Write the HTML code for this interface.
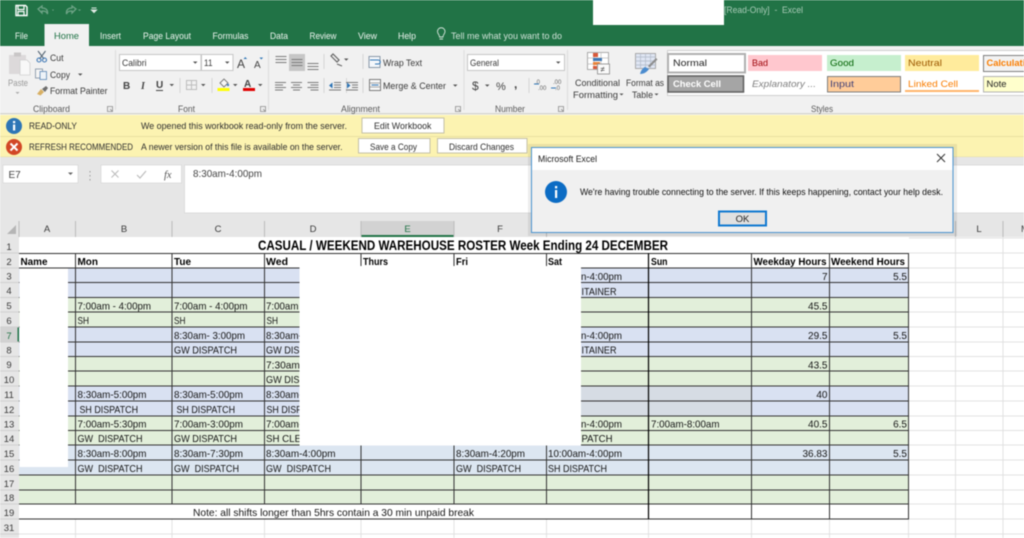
<!DOCTYPE html>
<html lang="en">
<head>
<meta charset="utf-8">
<title>Excel</title>
<style>
html,body{margin:0;padding:0;background:#fff;width:1024px;height:538px;overflow:hidden}
svg{display:block;filter:blur(.4px)}
text{font-family:"Liberation Sans",sans-serif;font-size:10px;fill:#444;white-space:pre}
.t{fill:#eef5f0;font-size:9.5px}
.r{fill:#3a3a3a;font-size:9.5px}
.g{fill:#5a5a5a;font-size:9px}
.y{fill:#2e2e2e;font-size:9.5px}
.c{fill:#161616;font-size:10.2px}
.b{fill:#000;font-size:10.2px;font-weight:bold}
.n{fill:#161616;font-size:10px;text-anchor:end}
.h{fill:#3a3a3a;font-size:9.5px;text-anchor:middle}
.rn{fill:#3a3a3a;font-size:9.5px;text-anchor:middle}
</style>
</head>
<body>
<svg width="1024" height="538" viewBox="0 0 1024 538" xmlns="http://www.w3.org/2000/svg">
<rect width="1024" height="538" fill="#fff"/>

<!-- title bar -->
<rect width="1024" height="46" fill="#217346"/>
<rect x="593" width="131" height="25" fill="#fff"/>
<text x="724" y="13" textLength="79" lengthAdjust="spacingAndGlyphs" style="fill:#a9cbb7;font-size:9.5px">[Read-Only]  -  Excel</text>
<!-- QAT -->
<path d="M16 5.5h9.5l1.5 1.5v8.500h-11z" fill="none" stroke="#fff" stroke-width="1.400"/>
<path d="M18 6v3.500h6V6M18 15v-3.500h6V15" fill="none" stroke="#fff" stroke-width="1.200"/>
<path d="M38 9l4-3v2c4 0 6 2 5.500 6-1-2.500-2.500-3-5.500-3v2z" fill="none" stroke="#6fa487" stroke-width="1.300"/>
<path d="M52 9.500l2 0-1 1.500z" fill="#6fa487"/>
<path d="M76 9l-4-3v2c-4 0-6 2-5.500 6 1-2.500 2.500-3 5.500-3v2z" fill="none" stroke="#6fa487" stroke-width="1.300"/>
<path d="M78 9.500l3 0-1.500 1.500z" fill="#6fa487"/>
<path d="M91.500 8h5M91.500 10l2.500 2.500 2.500-2.500z" stroke="#dfe9e3" fill="#dfe9e3"/>
<!-- tabs -->
<rect x="44.500" y="24" width="44.500" height="23" fill="#f1f1f1"/>
<text class="t" x="15" y="39" textLength="13" lengthAdjust="spacingAndGlyphs">File</text>
<text x="54" y="39" textLength="25" lengthAdjust="spacingAndGlyphs" style="fill:#217346;font-size:9.5px">Home</text>
<text class="t" x="100" y="39" textLength="21" lengthAdjust="spacingAndGlyphs">Insert</text>
<text class="t" x="143" y="39" textLength="48" lengthAdjust="spacingAndGlyphs">Page Layout</text>
<text class="t" x="212.500" y="39" textLength="36" lengthAdjust="spacingAndGlyphs">Formulas</text>
<text class="t" x="270" y="39" textLength="18" lengthAdjust="spacingAndGlyphs">Data</text>
<text class="t" x="309.500" y="39" textLength="27" lengthAdjust="spacingAndGlyphs">Review</text>
<text class="t" x="358" y="39" textLength="19" lengthAdjust="spacingAndGlyphs">View</text>
<text class="t" x="398" y="39" textLength="18" lengthAdjust="spacingAndGlyphs">Help</text>
<path d="M439.500 39h3.500M439.500 37h3.500c0-2.500 2-3 2-5.500a3.700 3.700 0 0 0-7.500 0c0 2.500 2 3 2 5.500z" fill="none" stroke="#d5e5db" stroke-width=".9"/>
<text class="t" x="451" y="39" textLength="111" lengthAdjust="spacingAndGlyphs" style="fill:#cfe2d7">Tell me what you want to do</text>

<!-- ribbon -->
<rect y="46" width="1024" height="68" fill="#f1f1f1"/>
<rect y="113" width="1024" height="1.500" fill="#d8d8d0"/>
<path d="M115.500 50v60M268.500 50v60M464 50v60M567.500 50v60" stroke="#dcdcdc"/>
<text class="g" x="33" y="112" textLength="37" lengthAdjust="spacingAndGlyphs">Clipboard</text>
<text class="g" x="178" y="112" textLength="17" lengthAdjust="spacingAndGlyphs">Font</text>
<text class="g" x="341" y="112" textLength="39" lengthAdjust="spacingAndGlyphs">Alignment</text>
<text class="g" x="495" y="112" textLength="30" lengthAdjust="spacingAndGlyphs">Number</text>
<text class="g" x="811" y="112" textLength="22" lengthAdjust="spacingAndGlyphs">Styles</text>
<g fill="none" stroke="#8a8a8a" stroke-width=".8">
<path d="M107.500 106.500h5v5h-5zM110 109l2.500 2.500"/>
<path d="M260.500 106.500h5v5h-5zM263 109l2.500 2.500"/>
<path d="M455.500 106.500h5v5h-5zM458 109l2.500 2.500"/>
<path d="M558.500 106.500h5v5h-5zM561 109l2.500 2.500"/>
</g>
<!-- clipboard -->
<rect x="9" y="55" width="17" height="19" fill="#dcd9da"/>
<rect x="14" y="52.500" width="7" height="4" fill="#c9c6c7"/>
<path d="M20 60h7l3 3v12H20z" fill="#f8f8f8" stroke="#cfcfcf" stroke-width=".8"/>
<text x="8" y="86" textLength="20" lengthAdjust="spacingAndGlyphs" style="fill:#9a9a9a;font-size:9.500px">Paste</text>
<path d="M15.500 92h4l-2 2z" fill="#a8a8a8"/>
<path d="M38 51l6 8M45.500 51l-6 8" stroke="#5a6a78" stroke-width="1.100"/>
<circle cx="39" cy="60" r="2" fill="none" stroke="#3f78b5" stroke-width="1.100"/>
<circle cx="44.500" cy="60" r="2" fill="none" stroke="#3f78b5" stroke-width="1.100"/>
<text class="r" x="50" y="61" textLength="13.500" lengthAdjust="spacingAndGlyphs">Cut</text>
<rect x="35.500" y="69" width="7" height="9" fill="#f5f5f5" stroke="#7d8ea0" stroke-width=".8"/>
<rect x="40" y="71.500" width="6.500" height="8" fill="#eef3f8" stroke="#5b86b5" stroke-width=".8"/>
<text class="r" x="50" y="78" textLength="20" lengthAdjust="spacingAndGlyphs">Copy</text>
<path d="M78 73.500h4.500l-2.250 2.200z" fill="#555"/>
<path d="M37 94l4-5 3 3-3.500 3.500z" fill="#d8b064"/>
<path d="M42 89l4-3 2 2-3 4z" fill="#6e6e6e"/>
<text class="r" x="50" y="94" textLength="57.500" lengthAdjust="spacingAndGlyphs">Format Painter</text>
<!-- font -->
<rect x="119.500" y="54.500" width="81.500" height="16" fill="#fff" stroke="#c6c6c6"/>
<rect x="201.500" y="54.500" width="31.500" height="16" fill="#fff" stroke="#c6c6c6"/>
<text class="r" x="122" y="66" textLength="24.500" lengthAdjust="spacingAndGlyphs">Calibri</text>
<text class="r" x="204" y="66" textLength="8.500" lengthAdjust="spacingAndGlyphs">11</text>
<path d="M193 61.500h4.500l-2.250 2.200zM225 61.500h4.500l-2.250 2.200z" fill="#555"/>
<text x="237" y="68" style="fill:#444;font-size:12px">A</text>
<path d="M243.500 59l1.800-2 1.800 2z" fill="#2f75b5"/>
<text x="254" y="68" style="fill:#444;font-size:10px">A</text>
<path d="M259.500 57.500l1.800 2 1.800-2z" fill="#2f75b5"/>
<text x="123" y="89" style="fill:#444;font-size:10px;font-weight:bold">B</text>
<text x="141" y="89" style="fill:#444;font-size:10px;font-style:italic;font-family:'Liberation Serif',serif;font-weight:bold">I</text>
<text x="156" y="88" style="fill:#444;font-size:10px;font-weight:bold">U</text>
<path d="M156 90.500h7" stroke="#444"/>
<path d="M169.500 84h4.500l-2.250 2.200zM201 84h4.500l-2.250 2.200zM233 84h4.500l-2.250 2.200zM258 84h4.500l-2.250 2.200z" fill="#555"/>
<path d="M180 78v15M212 78v15M346.500 78v15M324 54v15M324 78v15M529 78v15M363 54v15M363 78v15" stroke="#d6d6d6"/>
<path d="M186.500 80.500h10v9h-10zM191.500 80.500v9M186.500 85h10" fill="none" stroke="#bdbdbd"/>
<path d="M220 83l4-4 4 4-4 4z" fill="#f7f7f7" stroke="#777" stroke-width=".9"/>
<circle cx="228" cy="85" r="1.200" fill="#4b83bd"/>
<rect x="217.500" y="88" width="12" height="3" fill="#ffff00"/>
<text x="244" y="87" style="fill:#444;font-size:10px;font-weight:bold">A</text>
<rect x="243" y="88" width="12" height="3" fill="#e00000"/>
<!-- alignment -->
<rect x="289" y="54" width="16" height="17" fill="#c6c6c6"/>
<g stroke="#7a7a7a" stroke-width="1" fill="none">
<path d="M275.500 56.500h11M275.500 59.500h11M275.500 62.500h11"/>
<path d="M291.500 59.500h11M291.500 62.500h11M291.500 65.500h11"/>
<path d="M307.500 63.500h11M307.500 66.500h11M307.500 69.500h11"/>
<path d="M275 82.500h11M275 85h8M275 87.500h11M275 90h8"/>
<path d="M291 82.500h11M293 85h7M291 87.500h11M293 90h7"/>
<path d="M307.500 82.500h11M310.500 85h8M307.500 87.500h11M310.500 90h8"/>
<path d="M334 82.500h7M334 85h7M334 87.500h7M329 90h12"/>
<path d="M346 82.500h12M352 85h6M352 87.500h6M346 90h12"/>
</g>
<path d="M329 85.500l3.500-3v6zM350.500 85.500l-3.500-3v6z" fill="#2f75b5"/>
<path d="M331 56l6 6 2-2-6-6zM337 64l5 2" fill="none" stroke="#666" stroke-width="1.200"/>
<path d="M344 58.500h4.500l-2.250 2.200z" fill="#555"/>
<rect x="369" y="56.500" width="11" height="11" fill="#f4f7fb" stroke="#7d8ea0" stroke-width=".9"/>
<path d="M370 60h8c3 0 3 4 0 4h-3" fill="none" stroke="#2f75b5"/>
<text class="r" x="383" y="66" textLength="39" lengthAdjust="spacingAndGlyphs">Wrap Text</text>
<rect x="369.500" y="79.500" width="11" height="11" fill="#f8f8f8" stroke="#6e6e6e" stroke-width=".9"/>
<path d="M369.500 83h11M369.500 87h11" stroke="#8a8a8a" stroke-width=".8"/>
<path d="M371.500 85h7" stroke="#2f75b5"/>
<text class="r" x="383" y="89" textLength="63" lengthAdjust="spacingAndGlyphs">Merge &amp; Center</text>
<path d="M453 84.500h4.500l-2.250 2.200z" fill="#555"/>
<!-- number -->
<rect x="467.500" y="54.500" width="97" height="16" fill="#fff" stroke="#c6c6c6"/>
<text class="r" x="470" y="66" textLength="29" lengthAdjust="spacingAndGlyphs">General</text>
<path d="M556 61.500h4.500l-2.250 2.200z" fill="#555"/>
<text x="472" y="90" style="fill:#444;font-size:12px">$</text>
<path d="M485 84.500h4.500l-2.250 2.200z" fill="#555"/>
<text x="496" y="90" style="fill:#444;font-size:11px">%</text>
<text x="514" y="88" style="fill:#444;font-size:12px;font-weight:bold">,</text>
<text x="535" y="84" style="fill:#666;font-size:6px">.0</text>
<text x="538" y="90" style="fill:#666;font-size:6px">.00</text>
<path d="M534 84h5" stroke="#2f75b5"/>
<text x="553" y="84" style="fill:#666;font-size:6px">.00</text>
<text x="555" y="90" style="fill:#666;font-size:6px">.0</text>
<path d="M551 88h5" stroke="#2f75b5"/>
<!-- conditional -->
<rect x="587.500" y="52.500" width="21" height="17" fill="#fff" stroke="#999" stroke-width=".8"/>
<path d="M587.500 58h21M587.500 64h21M594 52.500v17M601 52.500v17" stroke="#bbb" stroke-width=".7"/>
<rect x="593" y="53" width="5" height="4" fill="#d8593a"/>
<rect x="593" y="58" width="9" height="3" fill="#3f78b5"/>
<rect x="593" y="62" width="7" height="3" fill="#e9843a"/>
<rect x="593" y="66" width="4" height="3" fill="#d8593a"/>
<rect x="597.500" y="64" width="12" height="10" fill="#fafafa" stroke="#8a8a8a" stroke-width=".8"/>
<text x="600.500" y="72" style="fill:#444;font-size:8px">≠</text>
<text class="r" x="575" y="86" textLength="45" lengthAdjust="spacingAndGlyphs">Conditional</text>
<text class="r" x="573" y="98" textLength="45" lengthAdjust="spacingAndGlyphs">Formatting</text>
<path d="M619.500 93.500h4l-2 2z" fill="#555"/>
<rect x="635.500" y="53.500" width="20" height="15" fill="#dfe6f3" stroke="#999" stroke-width=".8"/>
<path d="M635.500 57h20M635.500 61h20M635.500 65h20M640.500 53.500v15M645.500 53.500v15M650.500 53.500v15" stroke="#b0b8c6" stroke-width=".7"/>
<path d="M648 66l8-8 1.500 1.500-8 8z" fill="#8d8d8d"/>
<path d="M640 74c1-4 3-6 5-7l4 2c-2 3-5 5-9 5z" fill="#4b8ccf"/>
<text class="r" x="626" y="86" textLength="38" lengthAdjust="spacingAndGlyphs">Format as</text>
<text class="r" x="632" y="98" textLength="21" lengthAdjust="spacingAndGlyphs">Table</text>
<path d="M654.500 93.500h4l-2 2z" fill="#555"/>
<!-- styles gallery -->
<rect x="667.500" y="50.500" width="357" height="45" fill="#fff" stroke="#d0d0d0"/>
<rect x="668" y="54" width="77" height="18.500" fill="#fff" stroke="#b0b0b0" stroke-width="2"/>
<text x="673" y="66" textLength="34" lengthAdjust="spacingAndGlyphs" style="fill:#222;font-size:9.5px">Normal</text>
<rect x="668" y="76" width="75.500" height="16" fill="#a5a5a5" stroke="#5e5e5e" stroke-width="1.500"/>
<text x="673" y="87" textLength="48" lengthAdjust="spacingAndGlyphs" style="fill:#fff;font-size:9.5px;font-weight:bold">Check Cell</text>
<rect x="748" y="55" width="74" height="16" fill="#ffc7ce"/>
<text x="752" y="66" textLength="16" lengthAdjust="spacingAndGlyphs" style="fill:#9c0006;font-size:9.5px">Bad</text>
<text x="752" y="87" textLength="64" lengthAdjust="spacingAndGlyphs" style="fill:#7f7f7f;font-size:9.5px;font-style:italic">Explanatory ...</text>
<rect x="827" y="55" width="74" height="16" fill="#c6efce"/>
<text x="830" y="66" textLength="24" lengthAdjust="spacingAndGlyphs" style="fill:#006100;font-size:9.5px">Good</text>
<rect x="827.500" y="76.500" width="73" height="15.500" fill="#ffcc99" stroke="#7f7f7f"/>
<text x="830" y="87" textLength="24" lengthAdjust="spacingAndGlyphs" style="fill:#3f3f76;font-size:9.5px">Input</text>
<rect x="905" y="55" width="74" height="16" fill="#ffeb9c"/>
<text x="908" y="66" textLength="34" lengthAdjust="spacingAndGlyphs" style="fill:#9c5700;font-size:9.5px">Neutral</text>
<text x="908" y="87" textLength="50" lengthAdjust="spacingAndGlyphs" style="fill:#fa7d00;font-size:9.5px">Linked Cell</text>
<rect x="905" y="90" width="74" height="2" fill="#ffb56b"/>
<rect x="983.500" y="55.500" width="45" height="16" fill="#f2f2f2" stroke="#7f7f7f"/>
<text x="986.500" y="66" textLength="50" lengthAdjust="spacingAndGlyphs" style="fill:#fa7d00;font-size:9.5px;font-weight:bold">Calculation</text>
<rect x="983.500" y="76.500" width="45" height="15.500" fill="#ffffcc" stroke="#b2b2b2"/>
<text x="986.500" y="87" textLength="20" lengthAdjust="spacingAndGlyphs" style="fill:#222;font-size:9.5px">Note</text>

<!-- message bars -->
<rect y="115" width="1024" height="42" fill="#fcf3b1"/>
<rect y="136" width="1024" height="1" fill="#e9e0a0"/>
<rect y="156.500" width="1024" height="1" fill="#e6dfa4"/>
<circle cx="14" cy="126" r="8" fill="#2e75b6"/>
<rect x="13" y="124.500" width="2.200" height="6" fill="#fff"/><rect x="13" y="121" width="2.200" height="2.200" fill="#fff"/>
<circle cx="14" cy="147" r="8" fill="#d24726"/>
<path d="M10.500 143.500l7 7M17.500 143.500l-7 7" stroke="#fff" stroke-width="2"/>
<text class="y" x="29" y="129" textLength="48" lengthAdjust="spacingAndGlyphs">READ-ONLY</text>
<text class="y" x="141" y="129" textLength="206" lengthAdjust="spacingAndGlyphs">We opened this workbook read-only from the server.</text>
<rect x="362" y="118" width="82" height="15" fill="#fff" stroke="#c4c0a8"/>
<text class="y" x="374" y="129" textLength="57.500" lengthAdjust="spacingAndGlyphs">Edit Workbook</text>
<text class="y" x="29" y="150" textLength="104" lengthAdjust="spacingAndGlyphs">REFRESH RECOMMENDED</text>
<text class="y" x="141" y="150" textLength="201.500" lengthAdjust="spacingAndGlyphs">A newer version of this file is available on the server.</text>
<rect x="358.500" y="138.500" width="71.500" height="14.500" fill="#fff" stroke="#c4c0a8"/>
<text class="y" x="370" y="150" textLength="47" lengthAdjust="spacingAndGlyphs">Save a Copy</text>
<rect x="437.500" y="138.500" width="89.500" height="14.500" fill="#fff" stroke="#c4c0a8"/>
<text class="y" x="449" y="150" textLength="65" lengthAdjust="spacingAndGlyphs">Discard Changes</text>

<!-- formula bar -->
<rect y="157" width="1024" height="64" fill="#e6e6e6"/>
<rect x="3" y="165" width="75" height="18" fill="#fff" stroke="#dadada" stroke-width=".8"/>
<text x="8.500" y="178" style="fill:#444;font-size:10px">E7</text>
<path d="M68 172.500h5l-2.500 2.500z" fill="#666"/>
<path d="M90 171v1.500M90 175v1.500M90 179v1.500" stroke="#9a9a9a" stroke-width="1"/>
<rect x="101" y="165" width="80.500" height="18" fill="#fff" stroke="#dadada" stroke-width=".8"/>
<path d="M111.500 170.500l7 7M118.500 170.500l-7 7" stroke="#bdbdbd" stroke-width="1.100"/>
<path d="M137 175l3 3 6-7" fill="none" stroke="#bdbdbd" stroke-width="1.200"/>
<text x="164" y="178" style="fill:#555;font-size:10.500px;font-style:italic;font-family:'Liberation Serif',serif">fx</text>
<rect x="184.500" y="165" width="840" height="48" fill="#fff" stroke="#d8d8d8" stroke-width=".8"/>
<text x="193" y="177" textLength="69" lengthAdjust="spacingAndGlyphs" style="fill:#444;font-size:10.500px">8:30am-4:00pm</text>

<!-- column headers -->
<rect y="221" width="1024" height="16" fill="#e6e6e6"/>
<rect x="361" y="221" width="93" height="15" fill="#d2d2d2"/>
<rect x="361" y="235" width="93" height="2" fill="#217346"/>
<path d="M7 234h9v-9z" fill="#b5b5b5"/>
<path d="M19 221v16M75.500 221v16M172 221v16M264.500 221v16M361 221v16M454 221v16M546.500 221v16M955.500 221v16M1003 221v16" stroke="#bcbcbc"/>
<text class="h" x="47" y="232">A</text><text class="h" x="124" y="232">B</text><text class="h" x="218" y="232">C</text><text class="h" x="313" y="232">D</text><text class="h" x="407.500" y="232" style="fill:#217346">E</text><text class="h" x="500" y="232">F</text><text class="h" x="979" y="232">L</text><text x="1021" y="232" style="fill:#444;font-size:9.5px">M</text>

<!-- row headers -->
<rect y="237" width="19" height="301" fill="#e6e6e6"/>
<rect y="327" width="17.500" height="15" fill="#d2d2d2"/>
<rect x="17.500" y="327" width="1.500" height="15" fill="#217346"/>
<path d="M0 253h19M0 268h19M0 282.500h19M0 297.500h19M0 312h19M0 327h19M0 342h19M0 356.500h19M0 371h19M0 386h19M0 401h19M0 416h19M0 430.500h19M0 445h19M0 460h19M0 475h19M0 490h19M0 504h19M0 519h19M0 534h19" stroke="#cfcfcf"/>
<text class="rn" x="9" y="250">1</text><text class="rn" x="9" y="265">2</text><text class="rn" x="9" y="279.500">3</text><text class="rn" x="9" y="294">4</text><text class="rn" x="9" y="309">5</text><text class="rn" x="9" y="324">6</text><text class="rn" x="9" y="339" style="fill:#217346">7</text><text class="rn" x="9" y="353.500">8</text><text class="rn" x="9" y="368">9</text><text class="rn" x="9" y="383">10</text><text class="rn" x="9" y="398">11</text><text class="rn" x="9" y="413">12</text><text class="rn" x="9" y="427.500">13</text><text class="rn" x="9" y="442">14</text><text class="rn" x="9" y="457">15</text><text class="rn" x="9" y="472">16</text><text class="rn" x="9" y="487">17</text><text class="rn" x="9" y="501">18</text><text class="rn" x="9" y="516">19</text><text class="rn" x="9" y="531">31</text>

<!-- light gridlines outside table -->
<path d="M909 238h115M909 253h115M909 268h115M909 282.500h115M909 297.500h115M909 312h115M909 327h115M909 342h115M909 356.500h115M909 371h115M909 386h115M909 401h115M909 416h115M909 430.500h115M909 445h115M909 460h115M909 475h115M909 490h115M909 504h115M909 519h115M19 534h1005" stroke="#e2e2e2"/>
<path d="M955.500 237v301M1003 237v301M75.500 519v19M172 519v19M264.500 519v19M361 519v19M454 519v19M546.500 519v19M648.500 519v19M751.500 519v19M829.500 519v19M908.500 519v19" stroke="#e2e2e2"/>

<!-- bands -->
<rect x="19" y="268" width="890" height="29" fill="#d9e1f2"/>
<rect x="19" y="297" width="890" height="30" fill="#e2efda"/>
<rect x="19" y="327" width="890" height="29" fill="#d9e1f2"/>
<rect x="19" y="356" width="890" height="30" fill="#e2efda"/>
<rect x="19" y="386" width="890" height="30" fill="#d9e1f2"/>
<rect x="581" y="386" width="170" height="30" fill="#d6dce4"/>
<rect x="19" y="416" width="890" height="29" fill="#e2efda"/>
<rect x="19" y="445" width="890" height="30" fill="#dce6f1"/>
<rect x="19" y="475" width="890" height="29" fill="#e2efda"/>

<!-- table lines -->
<path d="M19 253.500h890M19 268h890M19 282.500h890M19 297.500h890M19 312h890M19 327h890M19 342h890M19 356.500h890M19 371h890M19 386h890M19 401h890M19 416h890M19 430.500h890M19 445h890M19 460h890M19 475h890M19 490h890M19 504h890M19 519h890" stroke="#333" stroke-width="1"/>
<path d="M75.500 253v251M172 253v251M264.500 253v251M361 253v251M454 253v251M546.500 253v251" stroke="#333" stroke-width="1"/>
<path d="M648.500 253v266" stroke="#000" stroke-width="1.200"/>
<path d="M751.500 253v266M829.500 253v266M908.500 253v266" stroke="#333" stroke-width="1"/>

<!-- row 1 + 2 -->
<text x="258" y="250" textLength="410" lengthAdjust="spacingAndGlyphs" style="fill:#000;font-size:13.500px;font-weight:bold">CASUAL / WEEKEND WAREHOUSE ROSTER Week Ending 24 DECEMBER</text>
<text class="b" x="20.500" y="265" textLength="27" lengthAdjust="spacingAndGlyphs">Name</text>
<text class="b" x="77.500" y="265" textLength="20.500" lengthAdjust="spacingAndGlyphs">Mon</text>
<text class="b" x="174" y="265" textLength="17" lengthAdjust="spacingAndGlyphs">Tue</text>
<text class="b" x="266" y="265" textLength="22" lengthAdjust="spacingAndGlyphs">Wed</text>
<text class="b" x="363" y="265" textLength="25" lengthAdjust="spacingAndGlyphs">Thurs</text>
<text class="b" x="456" y="265" textLength="12" lengthAdjust="spacingAndGlyphs">Fri</text>
<text class="b" x="548" y="265" textLength="14" lengthAdjust="spacingAndGlyphs">Sat</text>
<text class="b" x="651" y="265" textLength="16.500" lengthAdjust="spacingAndGlyphs">Sun</text>
<text class="b" x="753.500" y="265" textLength="73" lengthAdjust="spacingAndGlyphs">Weekday Hours</text>
<text class="b" x="831" y="265" textLength="74" lengthAdjust="spacingAndGlyphs">Weekend Hours</text>

<!-- row cells: B C D -->
<text class="c" x="77.500" y="309.500" textLength="73.500" lengthAdjust="spacingAndGlyphs">7:00am - 4:00pm</text>
<text class="c" x="174" y="309.500" textLength="73.500" lengthAdjust="spacingAndGlyphs">7:00am - 4:00pm</text>
<text class="c" x="266" y="309.500" textLength="73.500" lengthAdjust="spacingAndGlyphs">7:00am - 4:00pm</text>
<text class="c" x="77.500" y="324" textLength="11.500" lengthAdjust="spacingAndGlyphs">SH</text>
<text class="c" x="174" y="324" textLength="11.500" lengthAdjust="spacingAndGlyphs">SH</text>
<text class="c" x="266.500" y="324" textLength="11.500" lengthAdjust="spacingAndGlyphs">SH</text>
<text class="c" x="174" y="339" textLength="71" lengthAdjust="spacingAndGlyphs">8:30am- 3:00pm</text>
<text class="c" x="266" y="339" textLength="71" lengthAdjust="spacingAndGlyphs">8:30am- 3:00pm</text>
<text class="c" x="174" y="353.500" textLength="63" lengthAdjust="spacingAndGlyphs">GW DISPATCH</text>
<text class="c" x="266" y="353.500" textLength="63" lengthAdjust="spacingAndGlyphs">GW DISPATCH</text>
<text class="c" x="266" y="368.500" textLength="71" lengthAdjust="spacingAndGlyphs">7:30am-4:00pm</text>
<text class="c" x="266" y="383" textLength="63" lengthAdjust="spacingAndGlyphs">GW DISPATCH</text>
<text class="c" x="77.500" y="398" textLength="69" lengthAdjust="spacingAndGlyphs">8:30am-5:00pm</text>
<text class="c" x="174" y="398" textLength="69" lengthAdjust="spacingAndGlyphs">8:30am-5:00pm</text>
<text class="c" x="266" y="398" textLength="69" lengthAdjust="spacingAndGlyphs">8:30am-5:00pm</text>
<text class="c" x="79.500" y="413" textLength="58.500" lengthAdjust="spacingAndGlyphs">SH DISPATCH</text>
<text class="c" x="176.500" y="413" textLength="58.500" lengthAdjust="spacingAndGlyphs">SH DISPATCH</text>
<text class="c" x="266.500" y="413" textLength="58.500" lengthAdjust="spacingAndGlyphs">SH DISPATCH</text>
<text class="c" x="77.500" y="427.500" textLength="69" lengthAdjust="spacingAndGlyphs">7:00am-5:30pm</text>
<text class="c" x="174" y="427.500" textLength="69" lengthAdjust="spacingAndGlyphs">7:00am-3:00pm</text>
<text class="c" x="266" y="427.500" textLength="69" lengthAdjust="spacingAndGlyphs">7:00am-3:00pm</text>
<text class="c" x="77.500" y="442" textLength="65" lengthAdjust="spacingAndGlyphs">GW  DISPATCH</text>
<text class="c" x="174" y="442" textLength="63" lengthAdjust="spacingAndGlyphs">GW DISPATCH</text>
<text class="c" x="266" y="442" textLength="62" lengthAdjust="spacingAndGlyphs">SH CLEANER</text>
<text class="c" x="77.500" y="457" textLength="69" lengthAdjust="spacingAndGlyphs">8:30am-8:00pm</text>
<text class="c" x="174" y="457" textLength="69" lengthAdjust="spacingAndGlyphs">8:30am-7:30pm</text>
<text class="c" x="266" y="457" textLength="69.500" lengthAdjust="spacingAndGlyphs">8:30am-4:00pm</text>
<text class="c" x="456" y="457" textLength="69" lengthAdjust="spacingAndGlyphs">8:30am-4:20pm</text>
<text class="c" x="548" y="457" textLength="74" lengthAdjust="spacingAndGlyphs">10:00am-4:00pm</text>
<text class="c" x="77.500" y="472" textLength="65" lengthAdjust="spacingAndGlyphs">GW  DISPATCH</text>
<text class="c" x="174" y="472" textLength="65" lengthAdjust="spacingAndGlyphs">GW  DISPATCH</text>
<text class="c" x="266" y="472" textLength="65" lengthAdjust="spacingAndGlyphs">GW  DISPATCH</text>
<text class="c" x="456" y="472" textLength="65" lengthAdjust="spacingAndGlyphs">GW  DISPATCH</text>
<text class="c" x="548" y="472" textLength="59" lengthAdjust="spacingAndGlyphs">SH DISPATCH</text>
<text class="c" x="651" y="427.500" textLength="68.500" lengthAdjust="spacingAndGlyphs">7:00am-8:00am</text>
<text class="c" x="193" y="516" textLength="281" lengthAdjust="spacingAndGlyphs">Note: all shifts longer than 5hrs contain a 30 min unpaid break</text>

<!-- numbers -->
<text class="n" x="827.500" y="280">7</text><text class="n" x="907" y="280">5.5</text>
<text class="n" x="827.500" y="309.500">45.5</text>
<text class="n" x="827.500" y="339">29.5</text><text class="n" x="907" y="339">5.5</text>
<text class="n" x="827.500" y="368.500">43.5</text>
<text class="n" x="827.500" y="398">40</text>
<text class="n" x="827.500" y="427.500">40.5</text><text class="n" x="907" y="427.500">6.5</text>
<text class="n" x="827.500" y="457">36.83</text><text class="n" x="907" y="457">5.5</text>

<!-- redaction blocks -->
<rect x="19.500" y="268.500" width="48.500" height="198.500" fill="#fff"/>
<rect x="299.500" y="266" width="281.500" height="179.500" fill="#fff"/>

<!-- partially visible text to the right of redaction -->
<text class="c" x="581" y="280" textLength="41" lengthAdjust="spacingAndGlyphs">n-4:00pm</text>
<text class="c" x="581.500" y="295" textLength="35" lengthAdjust="spacingAndGlyphs">ITAINER</text>
<text class="c" x="581" y="339" textLength="41" lengthAdjust="spacingAndGlyphs">n-4:00pm</text>
<text class="c" x="581.500" y="353.500" textLength="35" lengthAdjust="spacingAndGlyphs">ITAINER</text>
<text class="c" x="581" y="427.500" textLength="41" lengthAdjust="spacingAndGlyphs">n-4:00pm</text>
<text class="c" x="581.500" y="442" textLength="31" lengthAdjust="spacingAndGlyphs">PATCH</text>

<!-- dialog -->
<rect x="528" y="144" width="429" height="92" fill="#000" opacity=".07"/>
<rect x="531.500" y="147.500" width="421.500" height="85" fill="#f0f0f0" stroke="#4a94cf"/>
<rect x="532" y="148" width="420.500" height="22" fill="#fff"/>
<text x="538" y="162" textLength="59" lengthAdjust="spacingAndGlyphs" style="fill:#222;font-size:9.500px">Microsoft Excel</text>
<path d="M937 154l8 8M945 154l-8 8" stroke="#333" stroke-width="1"/>
<circle cx="556" cy="192" r="11" fill="#0c6cc4"/>
<rect x="555" y="190" width="2.200" height="8" fill="#fff"/><rect x="555" y="186" width="2.200" height="2.400" fill="#fff"/>
<text x="580" y="195" textLength="363" lengthAdjust="spacingAndGlyphs" style="fill:#111;font-size:9.500px">We're having trouble connecting to the server. If this keeps happening, contact your help desk.</text>
<rect x="719" y="211.500" width="47" height="14" fill="#e1e1e1" stroke="#0f78d0" stroke-width="2"/>
<text x="742.500" y="222" text-anchor="middle" style="fill:#222;font-size:9.500px">OK</text>
</svg>
</body>
</html>
